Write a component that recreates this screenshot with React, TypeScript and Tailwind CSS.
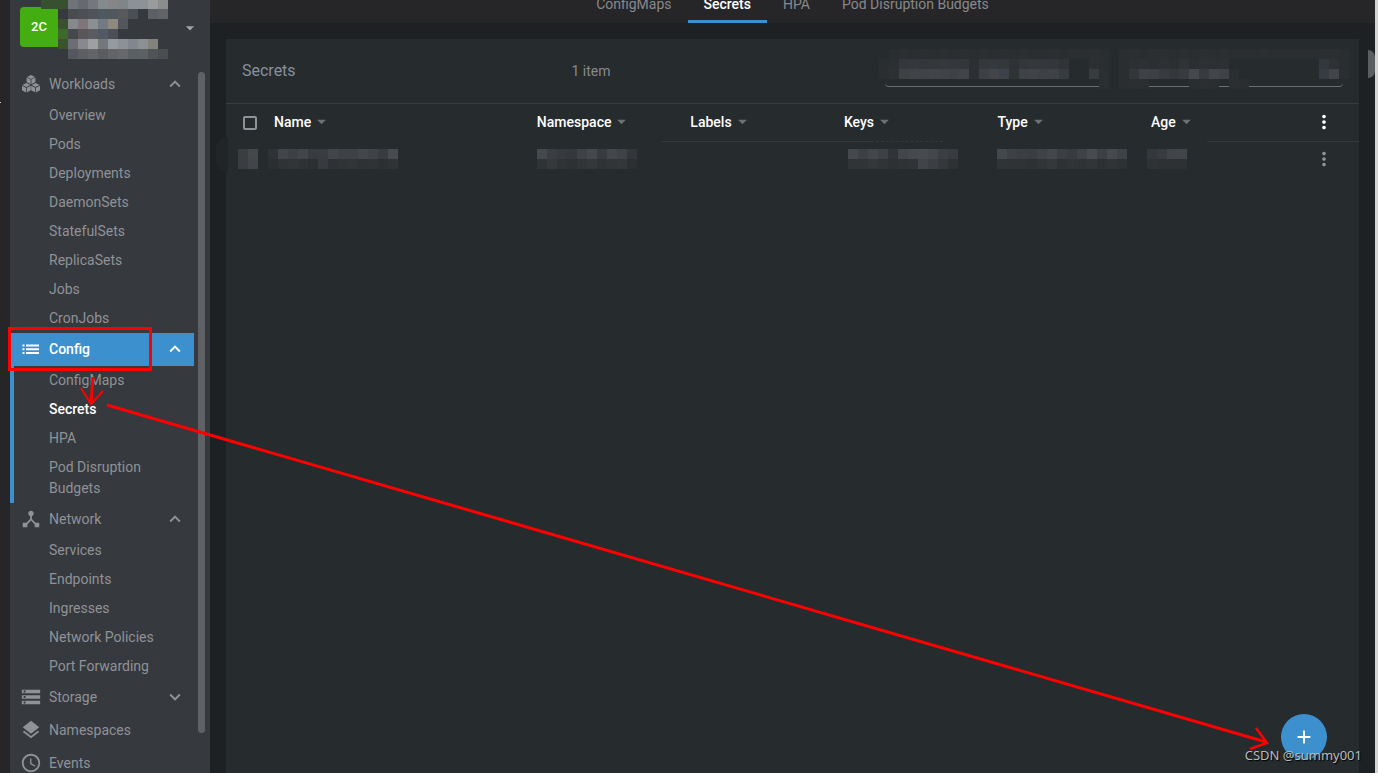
import { useState } from "react";
import type { ReactNode } from "react";
import {
  MdAccessTime,
  MdAdd,
  MdArrowDropDown,
  MdDeviceHub,
  MdKeyboardArrowDown,
  MdKeyboardArrowUp,
  MdLayers,
  MdMoreVert,
  MdStorage
} from "react-icons/md";

type Section = {
  id: string;
  label: string;
  icon: ReactNode;
  items?: string[];
};

const CELL = 10;

// each row is a list of cell colours, "-" leaves the cell empty
const CLUSTER_NAME = [
  "#375030 #6f747b #666a70 #74777b #858b8c #878687 #7f8588 #8b9297 #8d9296 #979b9d #8c8c8c",
  "- #494b4f #4c4f54 #50545a #4f5760 #50575d #57595d #4b4e52 - #5c6064 #606467",
  "#3a512f #85898c #80767a #8a9091 #747a84 #8c897f #53565a - - - -",
  "#3c6a2a #45484c #5b5659 #5b5c61 #515964 #4c4f55 - - - - -",
  "#3a532f #6b6e73 #87898f #a09f9f #74777b #949ba0 #8c9196 #80888d #8b9193 #83837c -",
  "- #54575b #5d5f62 #646568 #5a5c5f #626468 #66686b #5a5f64 #5d6062 #505357 #4c4d4f"
];

const ROW_CHECK = ["#3a3e41 #44484b", "#3a3e41 #42464a"];
const ROW_NAME = [
  "#2f3336 #42454a #3d4145 #42454a #383c40 #393d41 #42454a #3e4246 #3e4246 #43464a #3f4347 #383c40 #484b4f",
  "#2b2f32 #2f3336 #313538 #2e3235 #2b2f32 #373b3f #2e3235 #303437 #313538 #2e3235 #2f3336 #2c3033 #2f3336"
];
const ROW_NAMESPACE = [
  "#45484c #3a3e42 #373b3f #34383c #3f4347 #45484c #383c40 #43464a #3f4347 #33373a",
  "#2f3336 #35393c #2f3336 #2d3134 #313538 #34383b #2f3336 #313538 #33373a #2b2f32"
];
const ROW_KEYS = [
  "#45484c #3d4145 #43464a #3d4145 #303437 #43464a #46494d #484b4f #43464a #3b3f43 #383c40",
  "#303437 #303437 #33373a #303437 #2d3134 #2f3336 #303437 #414449 #3b3f43 #34383b #2d3134"
];
const ROW_TYPE = [
  "#45484c #3d4145 #3b3f43 #3a3e42 #3f4347 #43464a #3b3f43 #383c40 #3f4347 #484b4f #3d4145 #46494d #3f4347",
  "#303437 #2f3336 #2f3336 #2d3134 #303437 #34383b #2d3134 #303437 #2f3336 #313538 #2d3134 #303437 #2d3134"
];
const ROW_AGE = ["#34383c #383c40 #414449 #42454a", "#2f3336 #2d3134 #2d3134 #2d3134"];

const FILTER_VALUE = [
  "- #2a2e31 #2b2f32 #2a2e31 #2b2f32 #2a2e31 #2b2f32 #2a2e31 #2b2f32 #2a2e31 #2b2f32 #2a2e31 #2b2f32 #2a2e31 #2b2f32 #2a2e31 #2a2e31 #2b2f32 #2a2e31 #2b2f32 #2a2e31 #2b2f32 #2a2e31",
  "#2a2e31 #2b2f32 #34373b #35383c #33373a #34383b #35383c #34373b #33373a #2c3033 #34383b #35393d #34383b #2e3235 #33373a #34383b #34373b #33373a #303437 - - #2b2f32 #2a2e31",
  "#2a2e31 #2c3033 #3f4245 #404347 #3f4347 #414448 #404347 #3f4245 #414448 #2c3033 #3d4145 #424549 #3c4249 #303437 #3f4347 #404347 #3d4045 #3f4347 #383c40 - - #383c3f #2b2f32",
  "- - - - - - - - - - - - - - - - - - - - - - #2b2f32"
];
const SEARCH_VALUE = [
  "#2a2e31 #2b2f32 #2a2e31 #2b2f32 #2b2f32 #2a2e31 #2b2f32 #2a2e31 #2b2f32 #2a2e31 #2b2f32 #2a2e31 #2a2e31 #2a2e31 #2b2f32 #2a2e31 #2a2e31 #2a2e31 #2a2e31 #2a2e31 #2b2f32 #2b2f32 #2a2e31",
  "#2a2e31 #2c3033 #2d3134 #2b2f32 #2d3134 #2b2f32 #303437 #2b2f32 #2d3134 #2c3033 #2d3134 - - - - - - - - - #34373c #2e3235 #2a2e31",
  "#2a2e31 #33373a #3e4246 #3d4145 #383c40 #34383b #383c40 #45484c #383c40 #424549 #3f4347 #2b2f32 - - - - - - - - #383b42 #42454a #2b2f32",
  "#2a2e31 #2b2f32 #2b2f32 - - - - #2a2e31 #2b2f32 #2a2e31 - #2b2f32 #2a2e31 - - - - - - - - - -"
];

function Mosaic({ rows, className }: { rows: string[]; className?: string }) {
  const grid = rows.map((row) => row.split(" "));
  const width = grid[0].length * CELL;
  const height = grid.length * CELL;
  return (
    <svg
      width={width}
      height={height}
      viewBox={`0 0 ${width} ${height}`}
      shapeRendering="crispEdges"
      aria-hidden="true"
      className={`shrink-0 ${className ?? ""}`}
    >
      {grid.map((row, y) =>
        row.map((fill, x) =>
          fill === "-" ? null : (
            <rect key={`${x}-${y}`} x={x * CELL} y={y * CELL} width={CELL} height={CELL} fill={fill} />
          )
        )
      )}
    </svg>
  );
}

function Cube({ x, y }: { x: number; y: number }) {
  return (
    <g transform={`translate(${x} ${y})`}>
      <path d="M0 -4.6L4 -2.6L0 -0.6L-4 -2.6Z" />
      <path d="M-4.4 -1.9L-0.4 0.1V4.7L-4.4 2.6Z" />
      <path d="M4.4 -1.9L0.4 0.1V4.7L4.4 2.6Z" />
    </g>
  );
}

function WorkloadsIcon() {
  return (
    <svg width="22" height="22" viewBox="0 0 22 22" fill="currentColor" aria-hidden="true">
      <Cube x={11} y={6.5} />
      <Cube x={6.4} y={14.7} />
      <Cube x={15.6} y={14.7} />
    </svg>
  );
}

function ConfigIcon() {
  return (
    <svg width="22" height="22" viewBox="0 0 22 22" fill="currentColor" aria-hidden="true">
      <path d="M2.5 6.5h2v2h-2zM2.5 10.2h2v2h-2zM2.5 14h2v2h-2z" />
      <path d="M6 6.5h13v2H6zM6 10.2h13v2H6zM6 14h13v2H6z" />
    </svg>
  );
}

const SECTIONS: Section[] = [
  {
    id: "workloads",
    label: "Workloads",
    icon: <WorkloadsIcon />,
    items: [
      "Overview",
      "Pods",
      "Deployments",
      "DaemonSets",
      "StatefulSets",
      "ReplicaSets",
      "Jobs",
      "CronJobs"
    ]
  },
  {
    id: "config",
    label: "Config",
    icon: <ConfigIcon />,
    items: ["ConfigMaps", "Secrets", "HPA", "Pod Disruption Budgets"]
  },
  {
    id: "network",
    label: "Network",
    icon: <MdDeviceHub size={22} />,
    items: ["Services", "Endpoints", "Ingresses", "Network Policies", "Port Forwarding"]
  },
  { id: "storage", label: "Storage", icon: <MdStorage size={22} />, items: ["Persistent Volumes"] },
  { id: "namespaces", label: "Namespaces", icon: <MdLayers size={22} /> },
  { id: "events", label: "Events", icon: <MdAccessTime size={22} /> }
];

const TABS = ["ConfigMaps", "Secrets", "HPA", "Pod Disruption Budgets"];

const COLUMNS = [
  { label: "Name", cells: ROW_NAME, pull: "-ml-1.5" },
  { label: "Namespace", cells: ROW_NAMESPACE, pull: "" },
  { label: "Labels", cells: null, pull: "" },
  { label: "Keys", cells: ROW_KEYS, pull: "ml-1" },
  { label: "Type", cells: ROW_TYPE, pull: "" },
  { label: "Age", cells: ROW_AGE, pull: "-ml-1" }
];

function Sidebar() {
  const [open, setOpen] = useState<string[]>(["workloads", "config", "network"]);

  function toggle(id: string) {
    setOpen((prev) => (prev.includes(id) ? prev.filter((x) => x !== id) : [...prev, id]));
  }

  return (
    <aside className="flex w-[200px] shrink-0 flex-col bg-[#36393e] text-[#8f9296]">
      <div className="relative flex h-[68px] shrink-0 items-start pr-2.5 pl-2.5">
        <div className="mt-[7px] flex h-10 w-[38px] shrink-0 items-center justify-center rounded-l bg-[#43ad11] text-[13px] font-medium text-white">
          2C
        </div>
        <div className="absolute top-0 left-[31px] h-[9px] w-[17px] bg-[#375030]" />
        <Mosaic rows={CLUSTER_NAME} className="-mt-px" />
        <button type="button" aria-label="Cluster menu" className="mt-[18px] ml-auto text-[#a0a3a7]">
          <MdArrowDropDown size={20} />
        </button>
      </div>

      <div className="flex min-h-0 flex-1">
        <nav className="min-w-0 flex-1 overflow-hidden">
          {SECTIONS.map((section) => {
            const active = section.id === "config";
            const expanded = open.includes(section.id);
            return (
              <div key={section.id}>
                <button
                  type="button"
                  onClick={() => toggle(section.id)}
                  className={`flex h-[33px] w-full items-center pr-2 pb-px pl-2.5 text-left ${
                    active ? "bg-[#3d90ce] font-medium text-white" : ""
                  }`}
                >
                  {section.icon}
                  <span className="ml-[7px] flex-1">{section.label}</span>
                  {section.items ? (
                    expanded ? (
                      <MdKeyboardArrowUp size={22} />
                    ) : (
                      <MdKeyboardArrowDown size={22} />
                    )
                  ) : null}
                </button>
                {section.items && expanded ? (
                  <ul className={active ? "border-l-4 border-[#3d90ce]" : "border-l-4 border-transparent"}>
                    {section.items.map((item) => (
                      <li key={item}>
                        <a
                          href="#"
                          className={`block py-1 pr-6 pl-[35px] leading-[21px] ${
                            item === "Secrets" ? "font-medium text-white" : ""
                          }`}
                        >
                          {item}
                        </a>
                      </li>
                    ))}
                  </ul>
                ) : null}
              </div>
            );
          })}
        </nav>
        <div className="w-4 shrink-0 px-1 pt-1 pb-10">
          <div className="h-full w-[7px] rounded-full bg-[#606165]" />
        </div>
      </div>
    </aside>
  );
}

function SecretsTable() {
  return (
    <table className="w-full table-fixed text-left">
      <colgroup>
        <col className="w-12" />
        <col className="w-[23.2%]" />
        <col className="w-[13.55%]" />
        <col className="w-[13.55%]" />
        <col className="w-[13.55%]" />
        <col className="w-[13.55%]" />
        <col />
        <col className="w-[71px]" />
      </colgroup>
      <thead>
        <tr className="h-[37px] text-white">
          <th className="pl-[17px]">
            <input
              type="checkbox"
              aria-label="Select all"
              className="block size-[14px] appearance-none rounded-xs border-2 border-[#8f9296] checked:bg-[#3d90ce]"
            />
          </th>
          {COLUMNS.map((column) => (
            <th key={column.label} className="pb-0.5 font-medium">
              <button type="button" className="flex items-center">
                {column.label}
                <MdArrowDropDown size={21} className="text-[#6d7073]" />
              </button>
            </th>
          ))}
          <th className="pb-0.5">
            <button type="button" aria-label="Columns" className="mx-auto block">
              <MdMoreVert size={22} />
            </button>
          </th>
        </tr>
      </thead>
      <tbody>
        <tr aria-hidden="true">
          <td colSpan={8}>
            <div className="grid h-px grid-cols-[435fr_210fr_72fr_264fr_152fr]">
              <div />
              <div className="bg-[#35393d]" />
              <div className="border-t border-dashed border-[#34383c]" />
              <div />
              <div className="bg-[#35393d]" />
            </div>
          </td>
        </tr>
        <tr className="h-[34px]">
          <td className="pl-3">
            <Mosaic rows={ROW_CHECK} />
          </td>
          {COLUMNS.map((column) => (
            <td key={column.label}>
              {column.cells ? <Mosaic rows={column.cells} className={column.pull} /> : null}
            </td>
          ))}
          <td>
            <button type="button" aria-label="Row actions" className="mx-auto block text-[#8f9296]">
              <MdMoreVert size={22} />
            </button>
          </td>
        </tr>
      </tbody>
    </table>
  );
}

function Annotations() {
  return (
    <svg
      width="1378"
      height="773"
      viewBox="0 0 1378 773"
      fill="none"
      stroke="#ff0000"
      strokeWidth="3"
      aria-hidden="true"
      className="pointer-events-none absolute top-0 left-0"
    >
      <rect x="9.5" y="328.5" width="141" height="41" />
      <path d="M93 377L91 403" />
      <path d="M81 388L91 404L103 391" strokeWidth="2" />
      <path d="M107 405L1266 742" />
      <path d="M1256 728L1267 743L1250 749" strokeWidth="2.5" />
    </svg>
  );
}

export default function App() {
  const [tab, setTab] = useState("Secrets");

  return (
    <div className="relative flex h-screen overflow-hidden bg-[#1e2124] font-['Roboto',sans-serif] text-sm">
      <div className="w-2.5 shrink-0 bg-[#262628] pt-[102px]">
        <div className="h-px w-px bg-[#d0d0d0]" />
      </div>

      <Sidebar />

      <main className="relative flex min-w-0 flex-1 flex-col">
        <div className="flex h-[23px] shrink-0 items-end justify-center overflow-hidden bg-[#262628]">
          {TABS.map((name) => (
            <button
              key={name}
              type="button"
              onClick={() => setTab(name)}
              className={`shrink-0 border-b-[3px] px-4 pb-1.5 leading-5 ${
                tab === name ? "border-[#3d90ce] font-medium text-white" : "border-transparent text-[#87898d]"
              }`}
            >
              {name}
            </button>
          ))}
        </div>

        <div className="flex min-h-0 flex-1 px-4 pt-4">
          <section className="min-w-0 flex-1 bg-[#262b2e]">
            <header className="flex h-[65px] items-start border-b border-[#383c40] pt-2.5 pr-2.5 pl-4 leading-[44px]">
              <h1 className="flex-1 text-base leading-[44px] text-[#87909c]">Secrets</h1>
              <span className="flex-1 pl-[22px] text-[#87898d]">1 item</span>
              <div className="flex gap-2.5">
                <div className="relative h-10 w-[230px] px-1.5">
                  <button
                    type="button"
                    aria-label="Namespace filter"
                    className="block h-[38px] w-full rounded border-b border-[#6b6e71]"
                  />
                  <Mosaic rows={FILTER_VALUE} className="pointer-events-none absolute top-0 left-0" />
                </div>
                <div className="relative h-10 w-[230px] px-1.5">
                  <input
                    type="text"
                    aria-label="Search secrets"
                    className="block h-[38px] w-full rounded border-b border-[#6b6e71] outline-none"
                  />
                  <Mosaic rows={SEARCH_VALUE} className="pointer-events-none absolute top-0 left-0" />
                </div>
              </div>
            </header>
            <SecretsTable />
          </section>
        </div>

        <div className="absolute top-[137px] left-1.5 h-[35px] w-3 rounded-l-full bg-[#212528]" />
        <div className="absolute top-[50px] right-0 h-7 w-[7px] rounded-r-full bg-[#5c5d60]" />
        <button
          type="button"
          aria-label="Create secret"
          className="absolute right-12 bottom-[13px] flex size-[46px] items-center justify-center rounded-full bg-[#3d90ce] text-white"
        >
          <MdAdd size={22} />
        </button>
      </main>

      <div className="w-[3px] shrink-0 bg-[#d6d3d5]" />

      <Annotations />
      <p className="absolute right-4 bottom-2 font-['Noto_Sans',sans-serif] text-[13px] leading-5 text-[#b9bcbe] [text-shadow:1px_1px_1px_#000]">
        CSDN @summy001
      </p>
    </div>
  );
}
